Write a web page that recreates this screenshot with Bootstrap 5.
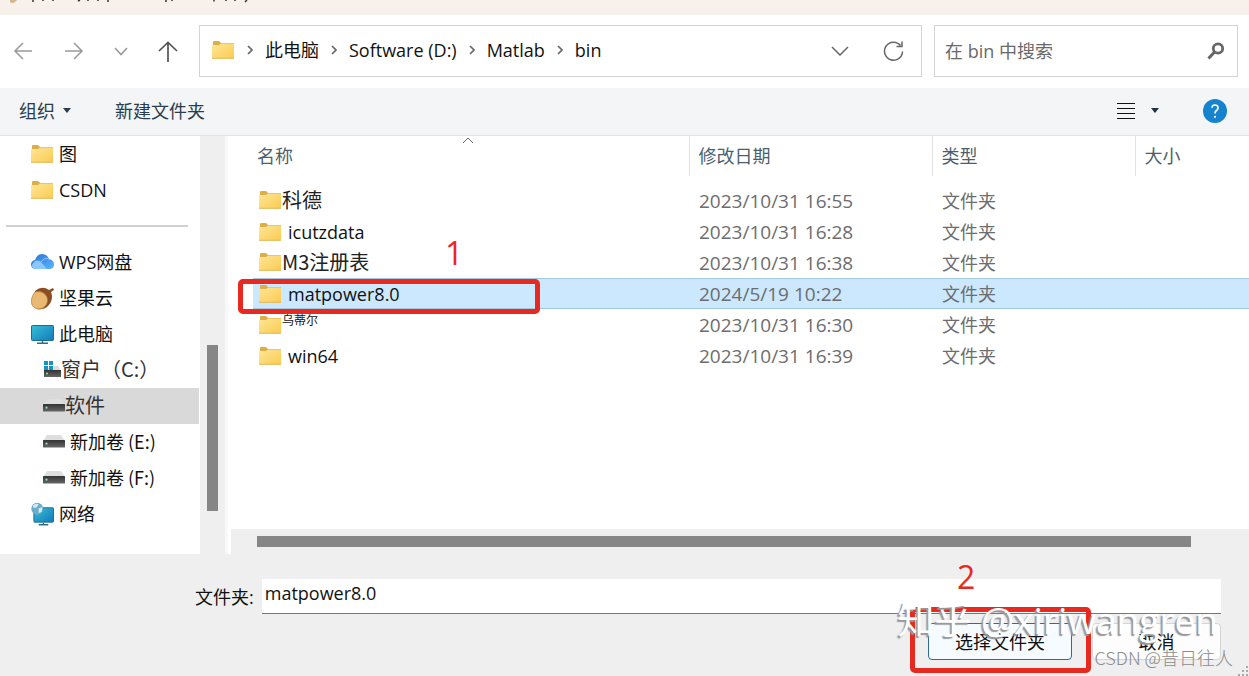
<!DOCTYPE html>
<html lang="zh-CN">
<head>
<meta charset="utf-8">
<meta name="viewport" content="width=device-width, initial-scale=1">
<title>选择文件夹</title>
<link href="https://cdn.jsdelivr.net/npm/bootstrap@5.3.0/dist/css/bootstrap.min.css" rel="stylesheet">
<style>
  body { font-family: "Open Sans", "Noto Sans CJK SC", sans-serif; font-size: 18px; line-height: 24px; color: #111; background: #fff; }
  .cjk { font-family: "Noto Sans CJK SC", sans-serif; }
  button, input, a { font: inherit; color: inherit; }
  .plain { border: 0; background: none; padding: 0; display: flex; align-items: center; }
  .titlebar { height: 15px; background: #f8f1eb; }
  .navrow { height: 73px; padding: 10px 11px 11px 12px; gap: 12px; }
  .fieldbox { border: 1px solid #d4d4d4; background: #fff; height: 52px; }
  .navicons { width: 175px; padding-right: 9px; }
  .crumbs { gap: 12px; padding-left: 12px; padding-bottom: 2px; }
  .crumbs a { text-decoration: none; color: #111; }
  .addrbtns { gap: 34px; padding-right: 17px; }
  .searchbox { width: 304px; padding: 0 12px 0 8px; }
  .searchbox input { border: 0; outline: 0; min-width: 0; background: none; color: #666; }
  .searchbox input::placeholder { color: #6a6a6a; opacity: 1; }
  .toolrow { height: 48px; background: #f3f5f6; border-bottom: 1px solid #e2e4e5; color: #2b3c4b; padding: 0 22px 2px 19px; gap: 44px; }
  .side { width: 200px; }
  .side a { height: 36px; display: flex; align-items: center; gap: 5px; text-decoration: none; color: #111; padding-left: 31px; }
  .side a.drive { padding-left: 43px; padding-bottom: 2px; }
  .side a.tight { gap: 0; font-size: 20px; color: #333; }
  .side a.picked { background: #d9d9d9; margin-right: 1px; }
  .side hr { margin: 17px 12px 17px 6px; border-top: 2px solid #d0d0d0; opacity: 1; }
  .vtrack { width: 25px; background: #efefef; padding: 209px 7px 0; }
  .vthumb { width: 11px; height: 166px; background: #868686; }
  .gutter { width: 6px; background: #fff; border-left: 3px solid #f8f8f8; }
  .files { table-layout: fixed; width: 100%; border-collapse: collapse; }
  .files th { font-weight: 400; color: #4d5f6e; height: 40px; padding: 0 0 0 9px; border-left: 1px solid #e2e2e2; position: relative; }
  .files th:nth-child(2) { border-left: 0; padding-left: 4px; }
  .files th:first-child { border: 0; }
  .files tbody::before { content: ""; display: block; height: 9px; }
  .files td { height: 31px; padding: 0 0 0 10px; color: #6d6d6d; white-space: nowrap; }
  .files td:nth-child(3) { font-size: 19px; }
  .files td:first-child, .files th:first-child { padding: 0; }
  .files td:nth-child(2) { padding-left: 6px; color: #111; }
  .files tr.picked td:not(:first-child) { background: #cce8ff; box-shadow: inset 0 1px #a3c9de, inset 0 -1px #a3c9de; }
  .fname { display: flex; align-items: center; gap: 6px; position: relative; }
  .fname.tight { gap: 0; font-size: 20px; color: #222; padding-bottom: 2px; }
  .fname.mini { gap: 0; font-size: 12px; line-height: 14px; }
  .fname.mini span { padding-bottom: 10px; }
  .sortmark { position: absolute; left: 209px; top: 1px; display: flex; }
  .htrack { height: 25px; background: #efefef; padding: 7px 58px 0 26px; }
  .hthumb { height: 11px; background: #868686; }
  .foot { background: #efefef; padding: 25px 28px 16px 195px; position: relative; }
  .foot input { height: 35px; border: 0; border-bottom: 1px solid #777; background: #fff; padding: 0 3px 6px; outline: 0; border-radius: 0; min-width: 0; }
  .acts { margin-top: 9px; gap: 20px; }
  .acts button { width: 129px; height: 37px; border: 1px solid #d5d5d5; border-radius: 4px; background: #fdfdfd; padding: 0; }
  .acts .main { width: 144px; border-color: #2a6d97; background: #f6fbff; }
  .redbox { position: absolute; border: 5px solid #e8291f; border-radius: 5px; pointer-events: none; z-index: 2; }
  .box1 { left: -21px; top: -3px; width: 302px; height: 35px; }
  .box2 { left: -18px; top: -16px; width: 181px; height: 66px; }
  .rednum { position: absolute; color: #e8291f; font-size: 32px; line-height: 32px; z-index: 2; }
  .num1 { left: 186px; top: -45px; }
  .num2 { left: 29px; top: -62px; }
  .wm { position: absolute; white-space: nowrap; z-index: 3; pointer-events: none; }
  .wm1 { right: 31px; top: 46px; font-size: 37px; line-height: 40px; color: #fff; text-shadow: -2px 2px 1px #999; }
  .wm2 { right: 16px; bottom: 7px; color: #8c8c8c; font-weight: 300; }
  .grip { position: absolute; right: 0; bottom: 0; }
</style>
</head>
<body class="d-flex flex-column min-vh-100">
<svg width="0" height="0" class="position-absolute">
  <defs>
    <linearGradient id="gf" x1="0" y1="0" x2="1" y2="1"><stop offset="0" stop-color="#ffe699"/><stop offset="1" stop-color="#fbcb50"/></linearGradient>
    <linearGradient id="gm" x1="0" y1="0" x2="1" y2="1"><stop offset="0" stop-color="#35c0d8"/><stop offset="1" stop-color="#1479b8"/></linearGradient>
    <linearGradient id="gc" x1="0" y1="0" x2="1" y2="1"><stop offset="0" stop-color="#2a6fd8"/><stop offset="1" stop-color="#5ab6ff"/></linearGradient>
    <linearGradient id="gd" x1="0" y1="0" x2="0" y2="1"><stop offset="0" stop-color="#333"/><stop offset="1" stop-color="#666"/></linearGradient>
    <symbol id="folder" viewBox="0 0 23 18"><path d="M1 1Q1 0 2 0H7L9 2H22V8H1Z" fill="#dcae45"/><path d="M0 4H7L9 2.500H22V17.500H0Z" fill="url(#gf)"/><path d="M0 17.300H22" stroke="#d9ad49" stroke-width=".8"/></symbol>
    <symbol id="drive" viewBox="0 0 22 13"><path d="M4 0H18L22 6H0Z" fill="#dedede"/><rect y="5" width="22" height="7.500" rx=".6" fill="url(#gd)"/><circle cx="3.500" cy="8.700" r="1.100" fill="#8ee0b0"/></symbol>
    <symbol id="next" viewBox="0 0 6 10"><path d="M1 1L5 5L1 9" fill="none" stroke="#666" stroke-width="1.700"/></symbol>
  </defs>
</svg>

<div class="titlebar overflow-hidden flex-shrink-0">
  <svg width="260" height="4" viewBox="0 0 260 4" class="d-block" aria-hidden="true"><path d="M10 0H17L15 2Q12 4 10 2Z" fill="#d8b48c"/><path d="M33 0V2M43 0V1M53 0V1M80 0L78 1M88 0V1M98 0V1M108 0V2M166 0V2M172 0V1M214 0V1.500M226 0V1M235 0V1M247 0L245 2" stroke="#333" stroke-width="1.500"/></svg>
</div>

<nav class="navrow d-flex">
  <div class="navicons d-flex align-items-center justify-content-between flex-shrink-0">
    <button class="plain" aria-label="后退"><svg width="22" height="18" viewBox="0 0 22 18"><path d="M11 1L3 9L11 17M3 9H20" fill="none" stroke="#9b9b9b" stroke-width="1.600"/></svg></button>
    <button class="plain" aria-label="前进"><svg width="20" height="18" viewBox="0 0 20 18"><path d="M10 1L18 9L10 17M18 9H1" fill="none" stroke="#9b9b9b" stroke-width="1.600"/></svg></button>
    <button class="plain" aria-label="最近"><svg width="14" height="9" viewBox="0 0 14 9"><path d="M1 1L7 7.500L13 1" fill="none" stroke="#999" stroke-width="1.600"/></svg></button>
    <button class="plain" aria-label="向上"><svg width="20" height="21" viewBox="0 0 20 21"><path d="M1 10L10 1.500L19 10M10 2V21" fill="none" stroke="#555" stroke-width="1.700"/></svg></button>
  </div>
  <div class="fieldbox d-flex align-items-center flex-grow-1">
    <div class="crumbs d-flex align-items-center flex-grow-1">
      <svg width="23" height="18"><use href="#folder"/></svg>
      <svg width="6" height="10"><use href="#next"/></svg><a href="#">此电脑</a>
      <svg width="6" height="10"><use href="#next"/></svg><a href="#">Software (D:)</a>
      <svg width="6" height="10"><use href="#next"/></svg><a href="#">Matlab</a>
      <svg width="6" height="10"><use href="#next"/></svg><a href="#">bin</a>
    </div>
    <div class="addrbtns d-flex align-items-center">
      <button class="plain" aria-label="展开"><svg width="18" height="10" viewBox="0 0 18 10"><path d="M1 1L9 9L17 1" fill="none" stroke="#666" stroke-width="1.500"/></svg></button>
      <button class="plain" aria-label="刷新"><svg width="21" height="21" viewBox="0 0 21 21"><path d="M17.500 4.500A9 9 0 1 0 19.500 10.500M19 .500V5.500H13.500" fill="none" stroke="#666" stroke-width="1.500"/></svg></button>
    </div>
  </div>
  <div class="fieldbox searchbox d-flex align-items-center flex-shrink-0">
    <input type="text" class="flex-grow-1" placeholder="在 bin 中搜索" aria-label="搜索">
    <svg width="18" height="18" viewBox="0 0 18 18"><circle cx="11" cy="6.500" r="4.700" fill="none" stroke="#666" stroke-width="2.800"/><path d="M7.500 10L1.500 16.500" stroke="#666" stroke-width="3"/></svg>
  </div>
</nav>

<div class="toolrow d-flex align-items-center">
  <button class="plain">组织<svg class="ms-2" width="8" height="5"><path d="M0 0H8L4 5Z" fill="#2b3c4b"/></svg></button>
  <button class="plain me-auto">新建文件夹</button>
  <button class="plain" aria-label="视图"><svg width="18" height="18"><path d="M0 1.500H18M0 6.500H18M0 11.500H18M0 16.500H18" stroke="#111" stroke-width="1.200"/></svg><svg class="ms-3" width="8" height="5"><path d="M0 0H8L4 5Z" fill="#1e3142"/></svg></button>
  <button class="plain" aria-label="帮助"><svg width="24" height="24" viewBox="0 0 24 24"><circle cx="12" cy="12" r="12" fill="#1583cd"/><path d="M9 8.800Q9 6 12 6T15 8.800Q15 10.500 13.500 11.500T12 14.500" fill="none" stroke="#fff" stroke-width="1.700"/><circle cx="12" cy="17.800" r="1.100" fill="#fff"/></svg></button>
</div>

<div class="d-flex flex-grow-1">
  <nav class="side flex-shrink-0">
    <a href="#"><svg width="23" height="18"><use href="#folder"/></svg>图</a>
    <a href="#"><svg width="23" height="18"><use href="#folder"/></svg>CSDN</a>
    <hr>
    <a href="#"><svg width="23" height="16" viewBox="0 0 23 16"><path d="M5 15A4.500 4.500 0 0 1 4 6Q6 0 11 0Q16 0 18 5Q23 6 23 10.500Q23 15 18 15Z" fill="url(#gc)"/><path d="M1 11Q5 4 10 8L16 15H5Q1 15 1 11Z" fill="#8bc8ff"/><path d="M10 8Q14 2 19 6" stroke="#8fc6fb" fill="none"/></svg>WPS网盘</a>
    <a href="#"><svg width="23" height="23" viewBox="0 0 23 23"><path d="M4 4Q11-2 18 3L22 1L23 3L20 5Q23 13 17 19Q13 23 6 22Z" fill="#8a4e22"/><path d="M4 5Q12 3 16 10Q18 17 12 21Q5 24 1 18Q-1 11 4 5Z" fill="#e9b974" stroke="#b57a3a" stroke-width=".7"/></svg>坚果云</a>
    <a href="#"><svg width="23" height="19" viewBox="0 0 23 19"><rect x=".5" y=".5" width="22" height="15" rx=".8" fill="url(#gm)" stroke="#1c6d92"/><path d="M11.500 16V18M6 18.300H17" stroke="#356d86" stroke-width="1.500"/></svg>此电脑</a>
    <a href="#" class="drive tight cjk"><svg width="18" height="18" viewBox="0 0 18 18"><path d="M8 6H15L18 11H1Z" fill="#ddd"/><rect x="1" y="10" width="17" height="7" fill="url(#gd)"/><path d="M1 1H5V5H1ZM6 1H10V5H6ZM1 6H5V10H1ZM6 6H10V10H6Z" fill="#1593c9"/><circle cx="4" cy="13.500" r="1" fill="#8ee0b0"/></svg>窗户（C:）</a>
    <a href="#" class="drive tight picked cjk"><svg width="22" height="13"><use href="#drive"/></svg>软件</a>
    <a href="#" class="drive cjk"><svg width="22" height="13"><use href="#drive"/></svg>新加卷 (E:)</a>
    <a href="#" class="drive cjk"><svg width="22" height="13"><use href="#drive"/></svg>新加卷 (F:)</a>
    <a href="#"><svg width="23" height="24" viewBox="0 0 24 24"><rect x="3" y="5.500" width="20.500" height="15" rx=".8" fill="url(#gm)" stroke="#1c6d92"/><path d="M13 21V23M8 23.200H18" stroke="#356d86" stroke-width="1.500"/><circle cx="6.500" cy="6.500" r="6.200" fill="#6aaccb"/><path d="M2 3Q5 0 8 2L6 5L3 6ZM8 6L12 5L11 10L8 11Z" fill="#d5eaf0"/></svg>网络</a>
  </nav>
  <div class="vtrack flex-shrink-0"><div class="vthumb"></div></div>
  <div class="gutter flex-shrink-0"></div>
  <main class="flex-grow-1 d-flex flex-column overflow-hidden">
    <div class="flex-grow-1">
      <table class="files">
        <colgroup><col style="width:22px"><col style="width:436px"><col style="width:243px"><col style="width:203px"><col></colgroup>
        <thead><tr><th></th><th>名称<span class="sortmark"><svg width="12" height="7"><path d="M1 6L6 1L11 6" fill="none" stroke="#666"/></svg></span></th><th>修改日期</th><th>类型</th><th>大小</th></tr></thead>
        <tbody>
          <tr><td></td><td><div class="fname tight cjk"><svg width="23" height="18"><use href="#folder"/></svg><span>科德</span></div></td><td>2023/10/31 16:55</td><td>文件夹</td><td></td></tr>
          <tr><td></td><td><div class="fname"><svg width="23" height="18"><use href="#folder"/></svg><span>icutzdata</span></div></td><td>2023/10/31 16:28</td><td>文件夹</td><td></td></tr>
          <tr><td></td><td><div class="fname tight cjk"><svg width="23" height="18"><use href="#folder"/></svg><span>M3注册表</span></div></td><td>2023/10/31 16:38</td><td>文件夹</td><td></td></tr>
          <tr class="picked"><td></td><td><div class="fname"><svg width="23" height="18"><use href="#folder"/></svg><span>matpower8.0</span><div class="redbox box1"></div><span class="rednum num1">1</span></div></td><td>2024/5/19 10:22</td><td>文件夹</td><td></td></tr>
          <tr><td></td><td><div class="fname mini cjk"><svg width="23" height="18"><use href="#folder"/></svg><span>乌蒂尔</span></div></td><td>2023/10/31 16:30</td><td>文件夹</td><td></td></tr>
          <tr><td></td><td><div class="fname"><svg width="23" height="18"><use href="#folder"/></svg><span>win64</span></div></td><td>2023/10/31 16:39</td><td>文件夹</td><td></td></tr>
        </tbody>
      </table>
    </div>
    <div class="htrack"><div class="hthumb"></div></div>
  </main>
</div>

<footer class="foot">
  <div class="d-flex align-items-center gap-2">
    <label for="folderName" class="flex-shrink-0">文件夹:</label>
    <input id="folderName" type="text" class="flex-grow-1" value="matpower8.0">
  </div>
  <div class="acts d-flex justify-content-end">
    <div class="position-relative"><button class="main">选择文件夹</button><div class="redbox box2"></div><span class="rednum num2">2</span></div>
    <button>取消</button>
  </div>
  <div class="wm wm1">知乎 @xiriwangren</div>
  <div class="wm wm2 cjk">CSDN @昔日往人</div>
  <svg class="grip" width="12" height="12"><path d="M9 2h2v2h-2zM5 6h2v2h-2zM9 6h2v2h-2zM1 10h2v2h-2zM5 10h2v2h-2zM9 10h2v2h-2z" fill="#aaa"/></svg>
</footer>
<script src="https://cdn.jsdelivr.net/npm/bootstrap@5.3.0/dist/js/bootstrap.bundle.min.js"></script>
</body>
</html>
